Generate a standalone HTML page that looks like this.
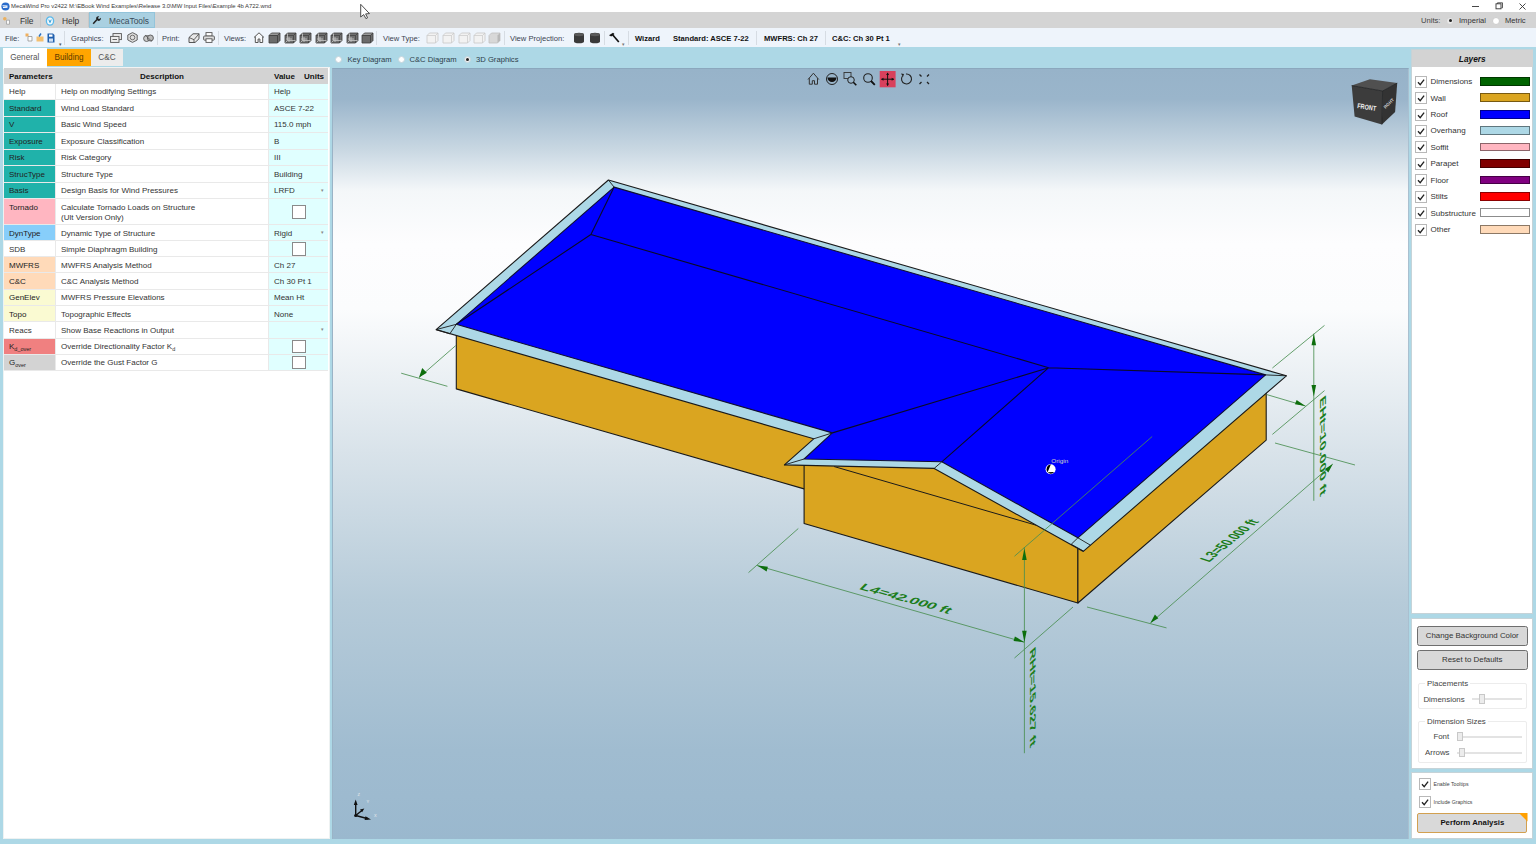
<!DOCTYPE html>
<html><head><meta charset="utf-8">
<style>
*{margin:0;padding:0;box-sizing:border-box}
html,body{width:1536px;height:844px;overflow:hidden;background:#add8e6;font-family:"Liberation Sans",sans-serif;color:#222}
.a{position:absolute;white-space:nowrap}
#title{left:0;top:0;width:1536px;height:12px;background:#fff}
#menu{left:0;top:12px;width:1536px;height:16px;background:#d4d4d4}
#tool{left:0;top:28px;width:1536px;height:19px;background:#eef4fb}
.tt{font-size:7.6px;line-height:10px;height:10px;top:33.7px;color:#3a4250}
.tb{font-size:7.6px;line-height:10px;height:10px;top:33.7px;color:#111;font-weight:bold}
.sep{position:absolute;top:31px;width:1px;height:14px;background:#d6dce3}
.mt{font-size:8.4px;line-height:10px;top:16px;color:#333}
.tab{height:17px;font-size:8.2px;line-height:17px;text-align:center}
.th{top:71.8px;font-size:8px;line-height:10px;font-weight:bold;color:#111}
.td{font-size:8px;line-height:10px;color:#333}
.td sub{font-size:5.5px;vertical-align:-1.5px}
.vr{top:54.5px;font-size:7.65px;line-height:10px;color:#2d3e4a}
.btn{background:#d8d8d8;border:1.3px solid #6e6e6e;border-radius:2.5px;text-align:center;font-size:7.9px;line-height:17.5px;color:#333}
.gl{font-size:7.9px;line-height:10px;color:#444}
</style></head><body>
<div id="title" class="a"></div>
<svg class="a" style="left:1px;top:1.5px" width="9" height="9" viewBox="0 0 9 9"><circle cx="4.5" cy="4.5" r="4.1" fill="#2a6ccc"/><path d="M1.5 3.8l5 .3M2 5.5l4.5-.2" stroke="#fff" stroke-width="1.1"/></svg>
<div class="a" style="left:11px;top:1.8px;font-size:5.9px;line-height:9px;color:#3a3a3a">MecaWind Pro v2422 M:\EBook Wind Examples\Release 3.0\MW Input Files\Example 4b A722.wnd</div>
<svg class="a" style="left:1470px;top:1px" width="62" height="10" viewBox="0 0 62 10"><path d="M2 5.5h7" stroke="#333" stroke-width="0.9"/><rect x="26" y="2.8" width="5" height="5" fill="none" stroke="#333" stroke-width="0.9"/><path d="M27.5 2.8v-1h5v5h-1" fill="none" stroke="#333" stroke-width="0.8"/><path d="M49.5 2.5l6 6M55.5 2.5l-6 6" stroke="#333" stroke-width="0.9"/></svg>
<div id="menu" class="a"></div>
<svg class="a" style="left:2px;top:16px" width="9" height="9" viewBox="0 0 9 9"><circle cx="2.8" cy="2.8" r="1.8" fill="#eab060"/><path d="M4.5 4.2h3v4h-3z" fill="#fafafa" stroke="#888" stroke-width=".6"/></svg>
<div class="a mt" style="left:20px">File</div>
<div class="a" style="left:40px;top:13px;width:1px;height:14px;background:#c8c8c8"></div>
<svg class="a" style="left:44.5px;top:15.5px" width="10" height="10" viewBox="0 0 10 10"><ellipse cx="5" cy="5" rx="3.6" ry="4.2" fill="#eef8fd" stroke="#5ab8ea" stroke-width="1.3"/><path d="M3.8 3.6l1.2 3 1.2-3" stroke="#3aa0da" stroke-width="1" fill="none"/></svg>
<div class="a mt" style="left:62px">Help</div>
<div class="a" style="left:88px;top:13px;width:1px;height:14px;background:#c8c8c8"></div>
<div class="a" style="left:89px;top:12px;width:66px;height:16px;background:#a9d0e1;border:1px solid #93c4da"></div>
<svg class="a" style="left:92px;top:15px" width="9" height="10" viewBox="0 0 9 10"><path d="M1.2 8.8L5 4.6" stroke="#222" stroke-width="1.5"/><path d="M4.3 4.2a2.2 2.2 0 0 1 3-2.8l-1.3 1.4.4.9.9.3 1.3-1.3a2.2 2.2 0 0 1-3 2.9Z" fill="#222"/></svg>
<div class="a mt" style="left:109px;color:#3a4a58">MecaTools</div>
<div class="a" style="left:1421px;top:16px;font-size:7.6px;line-height:10px;color:#444">Units:</div>
<div class="a" style="left:1446px;top:16.5px;width:8px;height:8px;border-radius:50%;background:#e9e9e9;border:1px solid #d0d0d0"></div>
<div class="a" style="left:1448.5px;top:19px;width:3px;height:3px;border-radius:50%;background:#222"></div>
<div class="a" style="left:1459px;top:16px;font-size:7.6px;line-height:10px;color:#333">Imperial</div>
<div class="a" style="left:1492px;top:16.5px;width:8px;height:8px;border-radius:50%;background:#fff;border:1px solid #ccc"></div>
<div class="a" style="left:1505px;top:16px;font-size:7.6px;line-height:10px;color:#333">Metric</div>
<div id="tool" class="a"></div>
<div class="a tt" style="left:5px">File:</div>
<svg class="a" style="left:25px;top:33px" width="8" height="9" viewBox="0 0 8 9"><rect x="0.5" y="0.5" width="3" height="3" fill="#f0b060"/><path d="M3 3.5h4v4.5h-4z" fill="#fff" stroke="#888" stroke-width=".7"/></svg>
<svg class="a" style="left:36px;top:32px" width="8" height="10" viewBox="0 0 8 10"><path d="M0.5 4.5h7v5h-7z" fill="#f4c070"/><path d="M3 4.5L5 1.5" stroke="#2a70c0" stroke-width="1.4"/></svg>
<svg class="a" style="left:47px;top:32.5px" width="8" height="10" viewBox="0 0 8 10"><path d="M0.5 0.5h5.5l1.5 1.5v7.5h-7z" fill="#1f5fae"/><rect x="2" y="1.5" width="3.5" height="2.2" fill="#fff"/><rect x="2" y="5.5" width="4" height="3.2" fill="#cfe0f4"/></svg>
<div class="a" style="left:59px;top:41px;font-size:5px;color:#555">&#9662;</div>
<div class="sep" style="left:64px"></div>
<div class="a tt" style="left:71px">Graphics:</div>
<svg class="a" style="left:110px;top:32.5px" width="12" height="10" viewBox="0 0 12 10"><rect x="3" y="0.6" width="8.4" height="6" fill="#eee" stroke="#555" stroke-width=".9"/><rect x="0.6" y="3.4" width="8.4" height="6" fill="#eee" stroke="#555" stroke-width=".9"/><path d="M2.5 6.5h4.5" stroke="#555" stroke-width=".9"/></svg>
<svg class="a" style="left:127px;top:32px" width="11" height="11" viewBox="0 0 11 11"><path d="M5.5 .6L10.2 3v5L5.5 10.4.8 8V3Z" fill="#ddd" stroke="#555" stroke-width=".9"/><circle cx="5.5" cy="5.5" r="2.3" fill="none" stroke="#555" stroke-width=".8"/></svg>
<svg class="a" style="left:143px;top:32.5px" width="11" height="10" viewBox="0 0 11 10"><circle cx="3.6" cy="5.5" r="3" fill="#ccc" stroke="#555" stroke-width=".9"/><circle cx="7.4" cy="5" r="3" fill="#bbb" stroke="#555" stroke-width=".9"/><path d="M2 2L9 8.5" stroke="#555" stroke-width=".8"/></svg>
<div class="sep" style="left:157px"></div>
<div class="a tt" style="left:162px">Print:</div>
<svg class="a" style="left:188px;top:32.5px" width="12" height="10" viewBox="0 0 12 10"><path d="M1 4.5L5 .8h6v5l-4 3.7H1Z" fill="#e8e8e8" stroke="#555" stroke-width="1"/><path d="M1 4.5l5 2.2 5-5.9M6 6.7v2.8" fill="none" stroke="#555" stroke-width=".9"/></svg>
<svg class="a" style="left:203px;top:32px" width="12" height="11" viewBox="0 0 12 11"><rect x="3" y=".6" width="6" height="3.5" fill="#fff" stroke="#555" stroke-width=".9"/><rect x=".6" y="4" width="10.8" height="4.2" rx="1" fill="#ddd" stroke="#555" stroke-width=".9"/><rect x="3" y="6.8" width="6" height="3.6" fill="#fff" stroke="#555" stroke-width=".9"/></svg>
<div class="sep" style="left:218px"></div>
<div class="a tt" style="left:224px">Views:</div>
<svg class="a" style="left:253px;top:32px" width="12" height="11" viewBox="0 0 12 11"><path d="M1 5.5L6 .8l5 4.7M2.3 4.5v6h2.8v-3.5h1.8v3.5h2.8v-6" fill="#fafafa" stroke="#555" stroke-width="1"/></svg>
<svg class="a" style="left:268px;top:32px" width="13" height="12" viewBox="0 0 13 12"><path d="M1 3.5L3.5 1H12V8.5L9.5 11H1Z" fill="#6b6b6b" stroke="#3c3c3c" stroke-width=".8"/><path d="M1 3.5H9.5V11M9.5 3.5L12 1" fill="none" stroke="#3c3c3c" stroke-width=".8"/><path d="M1.4 3.1L3.7 1.4H11.3L9.3 3.1Z" fill="#9a9a9a"/></svg>
<svg class="a" style="left:283.5px;top:32px" width="13" height="12" viewBox="0 0 13 12"><path d="M1 3.5L3.5 1H12V8.5L9.5 11H1Z" fill="#707070" stroke="#3c3c3c" stroke-width=".8"/><path d="M1 3.5H9.5V11M9.5 3.5L12 1" fill="none" stroke="#3c3c3c" stroke-width=".7"/><path d="M3.5 1.5V8.5H11.5M1.5 10.5L3.5 8.5M5 5v5M2 7h6" fill="none" stroke="#c8c8c8" stroke-width=".8"/></svg>
<svg class="a" style="left:299px;top:32px" width="13" height="12" viewBox="0 0 13 12"><path d="M1 3.5L3.5 1H12V8.5L9.5 11H1Z" fill="#707070" stroke="#3c3c3c" stroke-width=".8"/><path d="M1 3.5H9.5V11M9.5 3.5L12 1" fill="none" stroke="#3c3c3c" stroke-width=".7"/><path d="M3.5 1.5V8.5H11.5M1.5 10.5L3.5 8.5M5 5v5M2 7h6" fill="none" stroke="#c8c8c8" stroke-width=".8"/></svg>
<svg class="a" style="left:314.5px;top:32px" width="13" height="12" viewBox="0 0 13 12"><path d="M1 3.5L3.5 1H12V8.5L9.5 11H1Z" fill="#707070" stroke="#3c3c3c" stroke-width=".8"/><path d="M1 3.5H9.5V11M9.5 3.5L12 1" fill="none" stroke="#3c3c3c" stroke-width=".7"/><path d="M3.5 1.5V8.5H11.5M1.5 10.5L3.5 8.5M5 5v5M2 7h6" fill="none" stroke="#c8c8c8" stroke-width=".8"/></svg>
<svg class="a" style="left:330px;top:32px" width="13" height="12" viewBox="0 0 13 12"><path d="M1 3.5L3.5 1H12V8.5L9.5 11H1Z" fill="#707070" stroke="#3c3c3c" stroke-width=".8"/><path d="M1 3.5H9.5V11M9.5 3.5L12 1" fill="none" stroke="#3c3c3c" stroke-width=".7"/><path d="M3.5 1.5V8.5H11.5M1.5 10.5L3.5 8.5M5 5v5M2 7h6" fill="none" stroke="#c8c8c8" stroke-width=".8"/></svg>
<svg class="a" style="left:345.5px;top:32px" width="13" height="12" viewBox="0 0 13 12"><path d="M1 3.5L3.5 1H12V8.5L9.5 11H1Z" fill="#707070" stroke="#3c3c3c" stroke-width=".8"/><path d="M1 3.5H9.5V11M9.5 3.5L12 1" fill="none" stroke="#3c3c3c" stroke-width=".7"/><path d="M3.5 1.5V8.5H11.5M1.5 10.5L3.5 8.5M5 5v5M2 7h6" fill="none" stroke="#c8c8c8" stroke-width=".8"/></svg>
<svg class="a" style="left:361px;top:32px" width="13" height="12" viewBox="0 0 13 12"><path d="M1 3.5L3.5 1H12V8.5L9.5 11H1Z" fill="#6b6b6b" stroke="#3c3c3c" stroke-width=".8"/><path d="M1 3.5H9.5V11M9.5 3.5L12 1" fill="none" stroke="#3c3c3c" stroke-width=".8"/><path d="M1.4 3.1L3.7 1.4H11.3L9.3 3.1Z" fill="#9a9a9a"/></svg>
<div class="sep" style="left:376px"></div>
<div class="a tt" style="left:383px">View Type:</div>
<svg class="a" style="left:426px;top:32px" width="13" height="12" viewBox="0 0 13 12"><path d="M1 3.5L3.5 1H12V8.5L9.5 11H1Z" fill="#f2f2f2" stroke="#c8c8c8" stroke-width=".8"/><path d="M1 3.5H9.5V11M9.5 3.5L12 1" fill="none" stroke="#c8c8c8" stroke-width=".7"/></svg>
<svg class="a" style="left:442px;top:32px" width="13" height="12" viewBox="0 0 13 12"><path d="M1 3.5L3.5 1H12V8.5L9.5 11H1Z" fill="#f2f2f2" stroke="#c8c8c8" stroke-width=".8"/><path d="M1 3.5H9.5V11M9.5 3.5L12 1" fill="none" stroke="#c8c8c8" stroke-width=".7"/></svg>
<svg class="a" style="left:458px;top:32px" width="13" height="12" viewBox="0 0 13 12"><path d="M1 3.5L3.5 1H12V8.5L9.5 11H1Z" fill="#f2f2f2" stroke="#c8c8c8" stroke-width=".8"/><path d="M1 3.5H9.5V11M9.5 3.5L12 1" fill="none" stroke="#c8c8c8" stroke-width=".7"/></svg>
<svg class="a" style="left:473px;top:32px" width="13" height="12" viewBox="0 0 13 12"><path d="M1 3.5L3.5 1H12V8.5L9.5 11H1Z" fill="#f2f2f2" stroke="#c8c8c8" stroke-width=".8"/><path d="M1 3.5H9.5V11M9.5 3.5L12 1" fill="none" stroke="#c8c8c8" stroke-width=".7"/></svg>
<svg class="a" style="left:488px;top:32px" width="13" height="12" viewBox="0 0 13 12"><path d="M1 3.5L3.5 1H12V8.5L9.5 11H1Z" fill="#d8d8d8" stroke="#c0c0c0" stroke-width=".8"/><path d="M9.5 3.5L12 1V8.5L9.5 11Z" fill="#b8b8b8"/></svg>
<div class="sep" style="left:504px"></div>
<div class="a tt" style="left:510px">View Projection:</div>
<svg class="a" style="left:573px;top:32px" width="12" height="12" viewBox="0 0 12 12"><path d="M1 2.5a5 1.8 0 0 1 10 0V9.5a5 1.8 0 0 1-10 0Z" fill="#3a3a3a"/><ellipse cx="6" cy="2.6" rx="5" ry="1.7" fill="#5a5a5a"/></svg>
<svg class="a" style="left:589px;top:32px" width="12" height="12" viewBox="0 0 12 12"><path d="M1 2.5a5 1.8 0 0 1 10 0V9.5a5 1.8 0 0 1-10 0Z" fill="#3a3a3a"/><ellipse cx="6" cy="2.6" rx="5" ry="1.7" fill="#5a5a5a"/></svg>
<div class="sep" style="left:604px"></div>
<svg class="a" style="left:608px;top:32px" width="12" height="12" viewBox="0 0 12 12"><path d="M1 3.2L5 .8l1.5 1.3-3.3 2.5Z" fill="#111"/><path d="M4.6 2.8l6.2 7.2" stroke="#111" stroke-width="1.7"/></svg>
<div class="a" style="left:622px;top:41px;font-size:5px;color:#777">&#9662;</div>
<div class="sep" style="left:628px"></div>
<div class="a tb" style="left:635px">Wizard</div>
<div class="a tb" style="left:673px">Standard: ASCE 7-22</div>
<div class="sep" style="left:756px"></div>
<div class="a tb" style="left:764px">MWFRS: Ch 27</div>
<div class="sep" style="left:825px"></div>
<div class="a tb" style="left:832px">C&amp;C: Ch 30 Pt 1</div>
<div class="a" style="left:898px;top:41px;font-size:5px;color:#777">&#9662;</div>
<div class="a tab" style="left:47px;top:49px;width:44px;background:#ffa500;color:#5a3a00">Building</div>
<div class="a tab" style="left:91px;top:49px;width:32px;background:#ececec;color:#555">C&amp;C</div>
<div class="a" style="left:2.5px;top:66.5px;width:327px;height:772.5px;background:#fff;border:1.5px solid #eef2f2;border-top:1.5px solid #f2f2f2"></div>
<div class="a" style="left:2.5px;top:48px;width:44.5px;height:21px;background:#fff"></div>
<div class="a tab" style="left:2.5px;top:49px;width:44.5px;color:#555">General</div>
<div class="a" style="left:4px;top:68px;width:324px;height:15.5px;background:#d3d3d3"></div>
<div class="a th" style="left:9px">Parameters</div>
<div class="a th" style="left:140px">Description</div>
<div class="a th" style="left:274px">Value</div>
<div class="a th" style="left:304px">Units</div>
<div class="a" style="left:4px;top:83.5px;width:324px;height:16.5px;background:#e9e9e9"></div>
<div class="a" style="left:4px;top:83.5px;width:51px;height:15.5px;background:#ffffff"></div>
<div class="a" style="left:56px;top:83.5px;width:212px;height:15.5px;background:#fff"></div>
<div class="a" style="left:268.5px;top:83.5px;width:59.5px;height:15.5px;background:#e0ffff"></div>
<div class="a td" style="left:9px;top:87.3px;color:#333">Help</div>
<div class="a td" style="left:61px;top:87.3px">Help on modifying Settings</div>
<div class="a td" style="left:274px;top:87.3px">Help</div>
<div class="a" style="left:4px;top:100px;width:324px;height:16.5px;background:#e9e9e9"></div>
<div class="a" style="left:4px;top:100px;width:51px;height:15.5px;background:#20b2aa"></div>
<div class="a" style="left:56px;top:100px;width:212px;height:15.5px;background:#fff"></div>
<div class="a" style="left:268.5px;top:100px;width:59.5px;height:15.5px;background:#e0ffff"></div>
<div class="a td" style="left:9px;top:103.8px;color:#222">Standard</div>
<div class="a td" style="left:61px;top:103.8px">Wind Load Standard</div>
<div class="a td" style="left:274px;top:103.8px">ASCE 7-22</div>
<div class="a" style="left:4px;top:116.5px;width:324px;height:16.5px;background:#e9e9e9"></div>
<div class="a" style="left:4px;top:116.5px;width:51px;height:15.5px;background:#20b2aa"></div>
<div class="a" style="left:56px;top:116.5px;width:212px;height:15.5px;background:#fff"></div>
<div class="a" style="left:268.5px;top:116.5px;width:59.5px;height:15.5px;background:#e0ffff"></div>
<div class="a td" style="left:9px;top:120.3px;color:#222">V</div>
<div class="a td" style="left:61px;top:120.3px">Basic Wind Speed</div>
<div class="a td" style="left:274px;top:120.3px">115.0 mph</div>
<div class="a" style="left:4px;top:133px;width:324px;height:16.5px;background:#e9e9e9"></div>
<div class="a" style="left:4px;top:133px;width:51px;height:15.5px;background:#20b2aa"></div>
<div class="a" style="left:56px;top:133px;width:212px;height:15.5px;background:#fff"></div>
<div class="a" style="left:268.5px;top:133px;width:59.5px;height:15.5px;background:#e0ffff"></div>
<div class="a td" style="left:9px;top:136.8px;color:#222">Exposure</div>
<div class="a td" style="left:61px;top:136.8px">Exposure Classification</div>
<div class="a td" style="left:274px;top:136.8px">B</div>
<div class="a" style="left:4px;top:149.5px;width:324px;height:16.5px;background:#e9e9e9"></div>
<div class="a" style="left:4px;top:149.5px;width:51px;height:15.5px;background:#20b2aa"></div>
<div class="a" style="left:56px;top:149.5px;width:212px;height:15.5px;background:#fff"></div>
<div class="a" style="left:268.5px;top:149.5px;width:59.5px;height:15.5px;background:#e0ffff"></div>
<div class="a td" style="left:9px;top:153.3px;color:#222">Risk</div>
<div class="a td" style="left:61px;top:153.3px">Risk Category</div>
<div class="a td" style="left:274px;top:153.3px">III</div>
<div class="a" style="left:4px;top:166px;width:324px;height:16.5px;background:#e9e9e9"></div>
<div class="a" style="left:4px;top:166px;width:51px;height:15.5px;background:#20b2aa"></div>
<div class="a" style="left:56px;top:166px;width:212px;height:15.5px;background:#fff"></div>
<div class="a" style="left:268.5px;top:166px;width:59.5px;height:15.5px;background:#e0ffff"></div>
<div class="a td" style="left:9px;top:169.8px;color:#222">StrucType</div>
<div class="a td" style="left:61px;top:169.8px">Structure Type</div>
<div class="a td" style="left:274px;top:169.8px">Building</div>
<div class="a" style="left:4px;top:182.5px;width:324px;height:16.5px;background:#e9e9e9"></div>
<div class="a" style="left:4px;top:182.5px;width:51px;height:15.5px;background:#20b2aa"></div>
<div class="a" style="left:56px;top:182.5px;width:212px;height:15.5px;background:#fff"></div>
<div class="a" style="left:268.5px;top:182.5px;width:59.5px;height:15.5px;background:#e0ffff"></div>
<div class="a td" style="left:9px;top:186.3px;color:#222">Basis</div>
<div class="a td" style="left:61px;top:186.3px">Design Basis for Wind Pressures</div>
<div class="a td" style="left:274px;top:186.3px">LRFD</div>
<div class="a" style="left:321px;top:187.5px;font-size:4.5px;color:#888">&#9662;</div>
<div class="a" style="left:4px;top:199px;width:324px;height:26px;background:#e9e9e9"></div>
<div class="a" style="left:4px;top:199px;width:51px;height:25px;background:#ffb6c1"></div>
<div class="a" style="left:56px;top:199px;width:212px;height:25px;background:#fff"></div>
<div class="a" style="left:268.5px;top:199px;width:59.5px;height:25px;background:#e0ffff"></div>
<div class="a td" style="left:9px;top:202.8px;color:#222">Tornado</div>
<div class="a td" style="left:61px;top:202.8px">Calculate Tornado Loads on Structure<br>(Ult Version Only)</div>
<div class="a" style="left:292px;top:205.0px;width:13.5px;height:13.5px;background:#fff;border:1px solid #8a8a8a"></div>
<div class="a" style="left:4px;top:225px;width:324px;height:16px;background:#e9e9e9"></div>
<div class="a" style="left:4px;top:225px;width:51px;height:15px;background:#87cefa"></div>
<div class="a" style="left:56px;top:225px;width:212px;height:15px;background:#fff"></div>
<div class="a" style="left:268.5px;top:225px;width:59.5px;height:15px;background:#e0ffff"></div>
<div class="a td" style="left:9px;top:228.8px;color:#222">DynType</div>
<div class="a td" style="left:61px;top:228.8px">Dynamic Type of Structure</div>
<div class="a td" style="left:274px;top:228.8px">Rigid</div>
<div class="a" style="left:321px;top:230px;font-size:4.5px;color:#888">&#9662;</div>
<div class="a" style="left:4px;top:241px;width:324px;height:16px;background:#e9e9e9"></div>
<div class="a" style="left:4px;top:241px;width:51px;height:15px;background:#ffffff"></div>
<div class="a" style="left:56px;top:241px;width:212px;height:15px;background:#fff"></div>
<div class="a" style="left:268.5px;top:241px;width:59.5px;height:15px;background:#e0ffff"></div>
<div class="a td" style="left:9px;top:244.8px;color:#333">SDB</div>
<div class="a td" style="left:61px;top:244.8px">Simple Diaphragm Building</div>
<div class="a" style="left:292px;top:242.0px;width:13.5px;height:13.5px;background:#fff;border:1px solid #8a8a8a"></div>
<div class="a" style="left:4px;top:257px;width:324px;height:16px;background:#e9e9e9"></div>
<div class="a" style="left:4px;top:257px;width:51px;height:15px;background:#ffdab9"></div>
<div class="a" style="left:56px;top:257px;width:212px;height:15px;background:#fff"></div>
<div class="a" style="left:268.5px;top:257px;width:59.5px;height:15px;background:#e0ffff"></div>
<div class="a td" style="left:9px;top:260.8px;color:#222">MWFRS</div>
<div class="a td" style="left:61px;top:260.8px">MWFRS Analysis Method</div>
<div class="a td" style="left:274px;top:260.8px">Ch 27</div>
<div class="a" style="left:4px;top:273px;width:324px;height:16.5px;background:#e9e9e9"></div>
<div class="a" style="left:4px;top:273px;width:51px;height:15.5px;background:#ffdab9"></div>
<div class="a" style="left:56px;top:273px;width:212px;height:15.5px;background:#fff"></div>
<div class="a" style="left:268.5px;top:273px;width:59.5px;height:15.5px;background:#e0ffff"></div>
<div class="a td" style="left:9px;top:276.8px;color:#222">C&amp;C</div>
<div class="a td" style="left:61px;top:276.8px">C&amp;C Analysis Method</div>
<div class="a td" style="left:274px;top:276.8px">Ch 30 Pt 1</div>
<div class="a" style="left:4px;top:289.5px;width:324px;height:16.5px;background:#e9e9e9"></div>
<div class="a" style="left:4px;top:289.5px;width:51px;height:15.5px;background:#fafad2"></div>
<div class="a" style="left:56px;top:289.5px;width:212px;height:15.5px;background:#fff"></div>
<div class="a" style="left:268.5px;top:289.5px;width:59.5px;height:15.5px;background:#e0ffff"></div>
<div class="a td" style="left:9px;top:293.3px;color:#222">GenElev</div>
<div class="a td" style="left:61px;top:293.3px">MWFRS Pressure Elevations</div>
<div class="a td" style="left:274px;top:293.3px">Mean Ht</div>
<div class="a" style="left:4px;top:306px;width:324px;height:16px;background:#e9e9e9"></div>
<div class="a" style="left:4px;top:306px;width:51px;height:15px;background:#fafad2"></div>
<div class="a" style="left:56px;top:306px;width:212px;height:15px;background:#fff"></div>
<div class="a" style="left:268.5px;top:306px;width:59.5px;height:15px;background:#e0ffff"></div>
<div class="a td" style="left:9px;top:309.8px;color:#222">Topo</div>
<div class="a td" style="left:61px;top:309.8px">Topographic Effects</div>
<div class="a td" style="left:274px;top:309.8px">None</div>
<div class="a" style="left:4px;top:322px;width:324px;height:16.5px;background:#e9e9e9"></div>
<div class="a" style="left:4px;top:322px;width:51px;height:15.5px;background:#ffffff"></div>
<div class="a" style="left:56px;top:322px;width:212px;height:15.5px;background:#fff"></div>
<div class="a" style="left:268.5px;top:322px;width:59.5px;height:15.5px;background:#e0ffff"></div>
<div class="a td" style="left:9px;top:325.8px;color:#333">Reacs</div>
<div class="a td" style="left:61px;top:325.8px">Show Base Reactions in Output</div>
<div class="a" style="left:321px;top:327px;font-size:4.5px;color:#888">&#9662;</div>
<div class="a" style="left:4px;top:338.5px;width:324px;height:16.0px;background:#e9e9e9"></div>
<div class="a" style="left:4px;top:338.5px;width:51px;height:15.0px;background:#f08080"></div>
<div class="a" style="left:56px;top:338.5px;width:212px;height:15.0px;background:#fff"></div>
<div class="a" style="left:268.5px;top:338.5px;width:59.5px;height:15.0px;background:#e0ffff"></div>
<div class="a td" style="left:9px;top:342.3px;color:#222">K<sub>d_over</sub></div>
<div class="a td" style="left:61px;top:342.3px">Override Directionality Factor K<sub>d</sub></div>
<div class="a" style="left:292px;top:339.5px;width:13.5px;height:13.5px;background:#fff;border:1px solid #8a8a8a"></div>
<div class="a" style="left:4px;top:354.5px;width:324px;height:16.5px;background:#e9e9e9"></div>
<div class="a" style="left:4px;top:354.5px;width:51px;height:15.5px;background:#d3d3d3"></div>
<div class="a" style="left:56px;top:354.5px;width:212px;height:15.5px;background:#fff"></div>
<div class="a" style="left:268.5px;top:354.5px;width:59.5px;height:15.5px;background:#e0ffff"></div>
<div class="a td" style="left:9px;top:358.3px;color:#222">G<sub>over</sub></div>
<div class="a td" style="left:61px;top:358.3px">Override the Gust Factor G</div>
<div class="a" style="left:292px;top:355.75px;width:13.5px;height:13.5px;background:#fff;border:1px solid #8a8a8a"></div>
<div class="a" style="left:332px;top:68px;width:1077px;height:771px;border-top:1px solid #8ba7bd;border-left:1px solid #9ab3c6;border-right:1px solid #a9c0d0;background:linear-gradient(#97b3c9 0px,#9ab5cb 30px,#c8d7e2 80px,#f4f7f9 122px,#fdfdfe 175px,#fbfcfd 240px,#d9e3ea 382px,#b6cbd9 532px,#a0bcd0 682px,#9ab8ce 771px)"></div>
<div class="a" style="left:335px;top:55.5px;width:7px;height:7px;border-radius:50%;background:#fff;border:1px solid #c5d5dc"></div>
<div class="a vr" style="left:347.5px">Key Diagram</div>
<div class="a" style="left:397.5px;top:55.5px;width:7px;height:7px;border-radius:50%;background:#fff;border:1px solid #c5d5dc"></div>
<div class="a vr" style="left:409.5px">C&amp;C Diagram</div>
<div class="a" style="left:463.5px;top:55.5px;width:7px;height:7px;border-radius:50%;background:#f0f0f0;border:1px solid #c5d5dc"></div>
<div class="a" style="left:465.5px;top:57.5px;width:3px;height:3px;border-radius:50%;background:#222"></div>
<div class="a vr" style="left:476px">3D Graphics</div>
<svg class="a" style="left:332px;top:68px" width="1077" height="771" viewBox="332 68 1077 771">
<g stroke-linejoin="round">
<!-- walls -->
<path d="M456.3 330L456.3 388.9L804.1 488.9L830 496L830 436Z" fill="#daa520" stroke="#1a1a1a" stroke-width="1.1"/>
<path d="M804.1 458L941.8 461.8L1077.9 540L1077.9 603L804.1 523.5Z" fill="#daa520" stroke="#1a1a1a" stroke-width="1.1"/>
<path d="M1077.9 545L1077.9 603L1266.2 440.1L1266.2 385Z" fill="#daa520" stroke="#1a1a1a" stroke-width="1.1"/>
<path d="M834 466.5L1036.5 525.3" stroke="#1a1a1a" stroke-width="1"/>
<!-- overhang -->
<path d="M608.4 180L1286.4 375.8L1083.3 551.4L934.2 468.4L784.4 464.9L813.7 438.8L436.1 329.6Z" fill="#add8e6" stroke="#1a1a1a" stroke-width="1.1"/>
<!-- roof -->
<path d="M614.1 187.1L1265.6 374.9L1077.9 537.8L941.8 461.8L804.1 459L832.4 432.9L456.3 324.3Z" fill="#0000ff" stroke="#101030" stroke-width="1.1"/>
<path d="M590.9 234.5L1048.7 367.7M590.9 234.5L614.1 187.1M590.9 234.5L456.3 324.3M1048.7 367.7L1265.6 374.9M1048.7 367.7L832.4 432.9M1048.7 367.7L941.8 461.8" stroke="#0a0a28" stroke-width="1.1" fill="none"/>
<path d="M608.4 180L614.1 187.1M436.1 329.6L456.3 324.3L449.8 333.8L436.1 329.6M1286.4 375.8L1265.6 374.9M1071.2 544.3L1077.9 537.8L1090.6 545.3M1071.2 544.3L1083.6 551.1M934.2 468.4L941.8 461.8M784.4 464.9L804.1 459M813.7 438.8L832.4 432.9" stroke="#1a1a1a" stroke-width=".9" fill="none"/>
</g>
<!-- dimensions -->
<g stroke="#4a8f52" stroke-width=".85" fill="none">
<path d="M455.7 345.6L419 377.6M401.2 373.2L447.4 386.3"/>
<path d="M1266.5 394.5L1305.5 406"/>
<path d="M1313.8 333.7V500.8M1272.4 368L1324.5 325.4M1272.4 434.4L1324.5 390.6M1275 443L1355 465"/>
<path d="M1150.4 623.1L1332.8 464M1087 607L1166.5 627.9"/>
<path d="M757.1 565.5L1024.4 642.3M748.5 572.6L798.3 528.5"/>
<path d="M1024.4 547V753.2M1014.5 658L1073 607M1014.5 556.2L1152.2 436.5"/>
</g>
<g fill="#0d6e0d">
<path d="M419 377.6l3.2-9.5 4.6 4.6Z"/>
<path d="M1305.5 406l-10.5-1.8 1.6-4.3Z"/>
<path d="M1313.8 333.7l-2.3 11.5h4.6Z"/>
<path d="M1313.8 396.5l-2.3-11.5h4.6Z"/>
<path d="M1332.8 464l-4.5 8.5-3.4-3.6Z"/>
<path d="M1150.4 623.1l4.5-8.5 3.4 3.6Z"/>
<path d="M757.1 565.5l10.8 1.3-1.3 4.6Z"/>
<path d="M1024.4 642.3l-10.8-1.3 1.3-4.6Z"/>
<path d="M1024.4 548.4l-2.3 11.5h4.6Z"/>
<path d="M1024.4 642.3l-2.3-11.5h4.6Z"/>
</g>
<g fill="#1b7d1b" font-family="Liberation Sans" font-weight="bold" font-size="11">
<text x="0" y="0" transform="matrix(0.964,0.267,-0.75,0.75,858.6,589)" textLength="93" lengthAdjust="spacingAndGlyphs">L4=42.000 ft</text>
<text x="0" y="0" transform="matrix(0.777,-0.629,1.3,0.42,1208.9,562.4)" textLength="65" lengthAdjust="spacingAndGlyphs">L3=50.000 ft</text>
<text x="0" y="0" transform="matrix(0,1,-0.777,0.629,1319.8,399)" textLength="98.5" lengthAdjust="spacingAndGlyphs">EHt=10.000 ft</text>
<text x="0" y="0" transform="matrix(0,1,-0.74,0.67,1029.8,650.7)" textLength="98" lengthAdjust="spacingAndGlyphs">RHt=15.627 ft</text>
</g>
<!-- origin -->
<circle cx="1050.6" cy="469.2" r="5" fill="#fff"/>
<path d="M1050.9 464.2A5 5 0 0 0 1047.6 472.3Z M1047.6 472.3A5 5 0 0 0 1054.3 472Z" fill="#000"/>
<text x="1051.2" y="462.8" font-family="Liberation Sans" font-size="6" fill="#d5d5c5" textLength="17" lengthAdjust="spacingAndGlyphs">Origin</text>
<!-- nav cube -->
<path d="M1351.7 85.6L1369.9 79.2L1397.2 83.1L1382.6 91Z" fill="#505050"/>
<path d="M1351.7 85.6L1382.6 91L1381.9 124.4L1354.6 116.6Z" fill="#3c3c3c"/>
<path d="M1382.6 91L1397.2 83.1L1395.1 111.9L1381.9 124.4Z" fill="#333"/>
<path d="M1351.7 85.6L1382.6 91L1397.2 83.1M1382.6 91L1381.9 124.4" stroke="#222" stroke-width=".8" fill="none"/>
<text x="0" y="0" transform="translate(1357 108) rotate(9)" font-family="Liberation Sans" font-weight="bold" font-size="7" fill="#f2f2f2" textLength="19" lengthAdjust="spacingAndGlyphs">FRONT</text>
<text x="0" y="0" transform="translate(1385.5 109) rotate(-45)" font-family="Liberation Sans" font-weight="bold" font-size="4.5" fill="#ccc">RGHT</text>
<!-- axis -->
<g stroke="#111" stroke-width="1.4"><path d="M355.7 815.5V803M355.7 815.5L368 818.7M355.7 815.5L362.5 810"/></g>
<path d="M355.7 799.5l-1.9 5.5h3.8Z M371 819.5l-5.5 -3.2-0.9 3.7Z M364.3 808.4l-4.3 1.2 2.1 2.6Z" fill="#111"/>
<circle cx="355.7" cy="815.5" r="1.6" fill="#111"/>
<text x="357.5" y="796" font-family="Liberation Sans" font-size="4" fill="#eee">Z</text>
<text x="366.5" y="803" font-family="Liberation Sans" font-size="4" fill="#eee">Y</text>
<text x="374" y="817" font-family="Liberation Sans" font-size="4" fill="#eee">X</text>
</svg>
<!-- view toolbar -->
<svg class="a" style="left:805px;top:70px" width="130" height="19" viewBox="805 70 130 19">
<rect x="879.7" y="71" width="15.9" height="16.3" fill="#d8405c"/>
<path d="M808 79.5L813.4 73.2l5.4 6.3M809.3 78.2v6h3v-3.5h2.2v3.5h3v-6" fill="none" stroke="#333" stroke-width="1"/>
<circle cx="832" cy="79" r="5.5" fill="none" stroke="#222" stroke-width="1"/>
<path d="M827.5 77.5h9a4.5 4.5 0 0 1-9 0Z" fill="#111"/>
<rect x="844" y="72.5" width="7" height="6" fill="none" stroke="#333" stroke-width=".9"/>
<circle cx="851" cy="80" r="3.3" fill="#9ab5cb" stroke="#222" stroke-width="1"/>
<path d="M853.3 82.3l3 3" stroke="#111" stroke-width="1.6"/>
<circle cx="868" cy="78" r="4.3" fill="none" stroke="#222" stroke-width="1.1"/>
<path d="M871 81l3.8 3.8" stroke="#111" stroke-width="1.8"/>
<path d="M887.6 73v12.5M881.5 79.2h12.3" stroke="#111" stroke-width="1"/>
<path d="M887.6 72.5l-1.5 2.5h3Z M887.6 86l-1.5-2.5h3Z M881 79.2l2.5-1.5v3Z M894.2 79.2l-2.5-1.5v3Z" fill="#111"/>
<path d="M902.5 76a5 5 0 1 0 3.5-2" fill="none" stroke="#222" stroke-width="1.1"/>
<path d="M901 73.5l3 .5-1 3Z" fill="#222"/>
<path d="M919.5 74.5l2 2M929 74.5l-2 2M919.5 84l2-2M929 84l-2-2" stroke="#222" stroke-width="1.3"/>
</svg>
<div class="a" style="left:1411px;top:49px;width:122px;height:565px;background:#fff;border:1px solid #c5d3d8"></div>
<div class="a" style="left:1412px;top:49.5px;width:120.5px;height:17px;background:#d3d3d3"></div>
<div class="a" style="left:1412px;top:54.2px;width:120.5px;text-align:center;font-size:8.3px;line-height:10px;font-weight:bold;font-style:italic;color:#111">Layers</div>
<svg class="a" style="left:1415px;top:75.8px" width="12" height="12" viewBox="0 0 12 12"><rect x=".5" y=".5" width="11" height="11" fill="#fff" stroke="#b8b8b8"/><path d="M3 6.2l2.2 2.4 3.9-5" fill="none" stroke="#222" stroke-width="1.35"/></svg>
<div class="a" style="left:1430.5px;top:77.20px;font-size:8px;line-height:10px;color:#333">Dimensions</div>
<div class="a" style="left:1480px;top:77.00px;width:49.5px;height:8.8px;background:#006400;border:1px solid rgba(0,0,0,.45)"></div>
<svg class="a" style="left:1415px;top:92.22px" width="12" height="12" viewBox="0 0 12 12"><rect x=".5" y=".5" width="11" height="11" fill="#fff" stroke="#b8b8b8"/><path d="M3 6.2l2.2 2.4 3.9-5" fill="none" stroke="#222" stroke-width="1.35"/></svg>
<div class="a" style="left:1430.5px;top:93.62px;font-size:8px;line-height:10px;color:#333">Wall</div>
<div class="a" style="left:1480px;top:93.42px;width:49.5px;height:8.8px;background:#daa520;border:1px solid rgba(0,0,0,.45)"></div>
<svg class="a" style="left:1415px;top:108.64px" width="12" height="12" viewBox="0 0 12 12"><rect x=".5" y=".5" width="11" height="11" fill="#fff" stroke="#b8b8b8"/><path d="M3 6.2l2.2 2.4 3.9-5" fill="none" stroke="#222" stroke-width="1.35"/></svg>
<div class="a" style="left:1430.5px;top:110.04px;font-size:8px;line-height:10px;color:#333">Roof</div>
<div class="a" style="left:1480px;top:109.84px;width:49.5px;height:8.8px;background:#0000ff;border:1px solid rgba(0,0,0,.45)"></div>
<svg class="a" style="left:1415px;top:125.06px" width="12" height="12" viewBox="0 0 12 12"><rect x=".5" y=".5" width="11" height="11" fill="#fff" stroke="#b8b8b8"/><path d="M3 6.2l2.2 2.4 3.9-5" fill="none" stroke="#222" stroke-width="1.35"/></svg>
<div class="a" style="left:1430.5px;top:126.46px;font-size:8px;line-height:10px;color:#333">Overhang</div>
<div class="a" style="left:1480px;top:126.26px;width:49.5px;height:8.8px;background:#add8e6;border:1px solid rgba(0,0,0,.45)"></div>
<svg class="a" style="left:1415px;top:141.48px" width="12" height="12" viewBox="0 0 12 12"><rect x=".5" y=".5" width="11" height="11" fill="#fff" stroke="#b8b8b8"/><path d="M3 6.2l2.2 2.4 3.9-5" fill="none" stroke="#222" stroke-width="1.35"/></svg>
<div class="a" style="left:1430.5px;top:142.88px;font-size:8px;line-height:10px;color:#333">Soffit</div>
<div class="a" style="left:1480px;top:142.68px;width:49.5px;height:8.8px;background:#ffb6c1;border:1px solid rgba(0,0,0,.45)"></div>
<svg class="a" style="left:1415px;top:157.9px" width="12" height="12" viewBox="0 0 12 12"><rect x=".5" y=".5" width="11" height="11" fill="#fff" stroke="#b8b8b8"/><path d="M3 6.2l2.2 2.4 3.9-5" fill="none" stroke="#222" stroke-width="1.35"/></svg>
<div class="a" style="left:1430.5px;top:159.30px;font-size:8px;line-height:10px;color:#333">Parapet</div>
<div class="a" style="left:1480px;top:159.10px;width:49.5px;height:8.8px;background:#800000;border:1px solid rgba(0,0,0,.45)"></div>
<svg class="a" style="left:1415px;top:174.32px" width="12" height="12" viewBox="0 0 12 12"><rect x=".5" y=".5" width="11" height="11" fill="#fff" stroke="#b8b8b8"/><path d="M3 6.2l2.2 2.4 3.9-5" fill="none" stroke="#222" stroke-width="1.35"/></svg>
<div class="a" style="left:1430.5px;top:175.72px;font-size:8px;line-height:10px;color:#333">Floor</div>
<div class="a" style="left:1480px;top:175.52px;width:49.5px;height:8.8px;background:#800080;border:1px solid rgba(0,0,0,.45)"></div>
<svg class="a" style="left:1415px;top:190.74px" width="12" height="12" viewBox="0 0 12 12"><rect x=".5" y=".5" width="11" height="11" fill="#fff" stroke="#b8b8b8"/><path d="M3 6.2l2.2 2.4 3.9-5" fill="none" stroke="#222" stroke-width="1.35"/></svg>
<div class="a" style="left:1430.5px;top:192.14px;font-size:8px;line-height:10px;color:#333">Stilts</div>
<div class="a" style="left:1480px;top:191.94px;width:49.5px;height:8.8px;background:#ff0000;border:1px solid rgba(0,0,0,.45)"></div>
<svg class="a" style="left:1415px;top:207.16px" width="12" height="12" viewBox="0 0 12 12"><rect x=".5" y=".5" width="11" height="11" fill="#fff" stroke="#b8b8b8"/><path d="M3 6.2l2.2 2.4 3.9-5" fill="none" stroke="#222" stroke-width="1.35"/></svg>
<div class="a" style="left:1430.5px;top:208.56px;font-size:8px;line-height:10px;color:#333">Substructure</div>
<div class="a" style="left:1480px;top:208.36px;width:49.5px;height:8.8px;background:#ffffff;border:1px solid rgba(0,0,0,.45)"></div>
<svg class="a" style="left:1415px;top:223.58px" width="12" height="12" viewBox="0 0 12 12"><rect x=".5" y=".5" width="11" height="11" fill="#fff" stroke="#b8b8b8"/><path d="M3 6.2l2.2 2.4 3.9-5" fill="none" stroke="#222" stroke-width="1.35"/></svg>
<div class="a" style="left:1430.5px;top:224.98px;font-size:8px;line-height:10px;color:#333">Other</div>
<div class="a" style="left:1480px;top:224.78px;width:49.5px;height:8.8px;background:#ffdab9;border:1px solid rgba(0,0,0,.45)"></div>
<div class="a" style="left:1411px;top:618px;width:122px;height:150.5px;background:#fff;border:1px solid #c5d3d8"></div>
<div class="a btn" style="left:1417px;top:625.6px;width:110.5px;height:20px">Change Background Color</div>
<div class="a btn" style="left:1417px;top:650.2px;width:110.5px;height:20px">Reset to Defaults</div>
<div class="a" style="left:1418px;top:683px;width:109px;height:26px;border:1px solid #ececec;border-radius:2px"></div>
<div class="a gl" style="left:1425px;top:679px;padding:0 2px;background:#fff">Placements</div>
<div class="a gl" style="left:1423.4px;top:694.6px">Dimensions</div>
<div class="a" style="left:1472px;top:698px;width:50px;height:2.2px;background:#e3e3e3"></div>
<div class="a" style="left:1479px;top:694.3px;width:6px;height:9.5px;background:#ececec;border:1px solid #c8c8c8"></div>
<div class="a" style="left:1418px;top:721px;width:109px;height:41.5px;border:1px solid #ececec;border-radius:2px"></div>
<div class="a gl" style="left:1425px;top:716.5px;padding:0 2px;background:#fff">Dimension Sizes</div>
<div class="a gl" style="left:1433.4px;top:732px">Font</div>
<div class="a" style="left:1457px;top:735.5px;width:65px;height:2.2px;background:#e3e3e3"></div>
<div class="a" style="left:1457px;top:731.8px;width:6px;height:9.5px;background:#ececec;border:1px solid #c8c8c8"></div>
<div class="a gl" style="left:1425px;top:748px">Arrows</div>
<div class="a" style="left:1457px;top:751.5px;width:65px;height:2.2px;background:#e3e3e3"></div>
<div class="a" style="left:1459px;top:747.8px;width:6px;height:9.5px;background:#ececec;border:1px solid #c8c8c8"></div>
<div class="a" style="left:1411px;top:772px;width:122px;height:66.5px;background:#fff;border:1px solid #c5d3d8"></div>
<svg class="a" style="left:1418.6px;top:778.1px" width="12" height="12" viewBox="0 0 12 12"><rect x=".5" y=".5" width="11" height="11" fill="#fff" stroke="#b8b8b8"/><path d="M3 6.2l2.2 2.4 3.9-5" fill="none" stroke="#222" stroke-width="1.35"/></svg>
<div class="a" style="left:1433.5px;top:781px;font-size:5.2px;line-height:6px;color:#444">Enable Tooltips</div>
<svg class="a" style="left:1418.6px;top:796px" width="12" height="12" viewBox="0 0 12 12"><rect x=".5" y=".5" width="11" height="11" fill="#fff" stroke="#b8b8b8"/><path d="M3 6.2l2.2 2.4 3.9-5" fill="none" stroke="#222" stroke-width="1.35"/></svg>
<div class="a" style="left:1433.5px;top:799px;font-size:5.2px;line-height:6px;color:#444">Include Graphics</div>
<div class="a" style="left:1417.2px;top:813.2px;width:110.3px;height:19.6px;background:#d9d9d9;border:1.3px solid #d2a050;border-radius:2px;text-align:center;font-size:7.8px;line-height:18.5px;font-weight:bold;color:#111">Perform Analysis</div>
<svg class="a" style="left:1519px;top:813.2px" width="8.5" height="8.5" viewBox="0 0 8.5 8.5"><path d="M0 0H8.5V8.5Z" fill="#ffa000"/></svg>
<svg class="a" style="left:355px;top:0px" width="20" height="24" viewBox="355 0 20 24"><path d="M360.7 4.3L360.7 17L363.7 14.6L365.9 18.6L367.6 17.8L365.6 13.9L369.5 13.6Z" fill="#fff" stroke="#454545" stroke-width=".95" stroke-linejoin="round"/></svg>
</body></html>
